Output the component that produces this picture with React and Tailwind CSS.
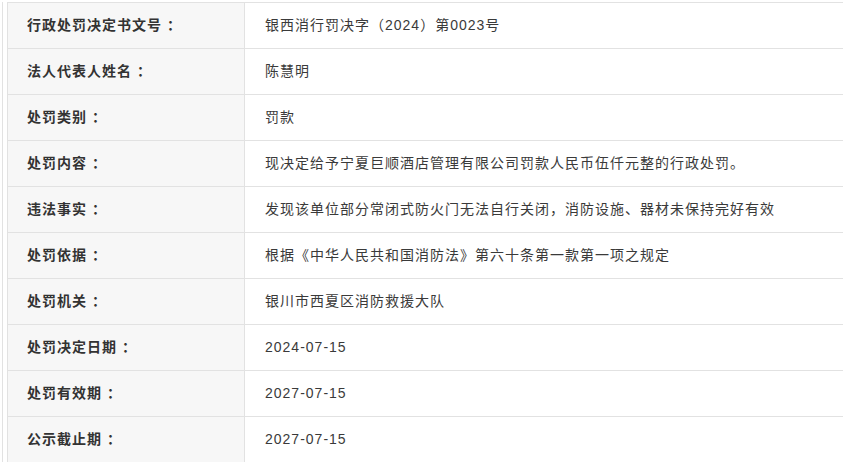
import React from 'react';

const rows = [
  ['行政处罚决定书文号', '银西消行罚决字（2024）第0023号'],
  ['法人代表人姓名', '陈慧明'],
  ['处罚类别', '罚款'],
  ['处罚内容', '现决定给予宁夏巨顺酒店管理有限公司罚款人民币伍仟元整的行政处罚。'],
  ['违法事实', '发现该单位部分常闭式防火门无法自行关闭，消防设施、器材未保持完好有效'],
  ['处罚依据', '根据《中华人民共和国消防法》第六十条第一款第一项之规定'],
  ['处罚机关', '银川市西夏区消防救援大队'],
  ['处罚决定日期', '2024-07-15'],
  ['处罚有效期', '2027-07-15'],
  ['公示截止期', '2027-07-15'],
];

export default function App() {
  return (
    <div className="w-[843px] h-[462px] overflow-hidden bg-white pl-[2px] pt-[2px] font-['Liberation_Sans','Noto_Sans_CJK_SC',sans-serif] text-[14px] tracking-[1px] text-[#333]">
      <div className="border-l border-[#e2e2e2] pl-[4px] h-full">
        <div className="border-l border-t border-[#e2e2e2] w-[900px]">
          {rows.map(([label, value]) => (
            <div key={label} className="flex h-[46px] border-b border-[#e2e2e2]">
              <div className="w-[237px] shrink-0 bg-[#f7f7f7] border-r border-[#e2e2e2] flex items-center pl-[19px] font-bold">
                {label}
                <span className="pl-[5px]">：</span>
              </div>
              <div className="flex-1 flex items-center pl-[20px] text-[#3a3a3a]">{value}</div>
            </div>
          ))}
        </div>
      </div>
    </div>
  );
}
